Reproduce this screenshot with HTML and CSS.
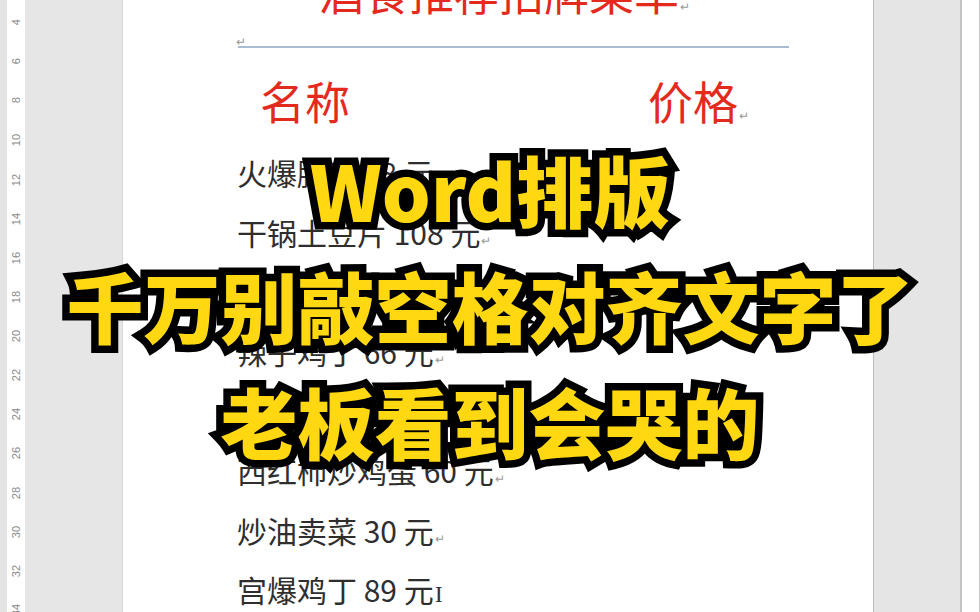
FILE: index.html
```html
<!DOCTYPE html>
<html lang="zh-CN">
<head>
<meta charset="utf-8">
<title>Word排版</title>
<link rel="stylesheet" href="styles.css">
</head>
<body>
<div class="app">
  <div class="edge-left"></div>
  <div class="vruler">
    <span class="num">4</span><span class="num">6</span><span class="num">8</span><span class="num">10</span>
    <span class="num">12</span><span class="num">14</span><span class="num">16</span><span class="num">18</span>
    <span class="num">20</span><span class="num">22</span><span class="num">24</span><span class="num">26</span>
    <span class="num">28</span><span class="num">30</span><span class="num">32</span><span class="num">34</span>
  </div>
  <div class="gutter-left"></div>
  <div class="page">
    <div class="doc">
      <p class="title">酒食推荐招牌菜单<span class="mark">↵</span></p>
      <div class="rule-row"><span class="mark">↵</span><div class="rule"></div></div>
      <div class="heads">
        <span class="head">名称</span>
        <span class="head head-price">价格<span class="mark">↵</span></span>
      </div>
      <div class="items">
        <p class="item">火爆腰花 88 元<span class="mark">↵</span></p>
        <p class="item">干锅土豆片 108 元<span class="mark">↵</span></p>
        <p class="item">水煮肉片 78 元<span class="mark">↵</span></p>
        <p class="item">辣子鸡丁 66 元<span class="mark">↵</span></p>
        <p class="item">鱼香肉丝 48 元<span class="mark">↵</span></p>
        <p class="item">西红柿炒鸡蛋 60 元<span class="mark">↵</span></p>
        <p class="item">炒油卖菜 30 元<span class="mark">↵</span></p>
        <p class="item">宫爆鸡丁 89 元<span class="cursor">I</span></p>
      </div>
    </div>
  </div>
  <div class="gutter-right"></div>
  <div class="scroll"></div>
</div>
<div class="overlay">
  <div class="line">Word排版</div>
  <div class="line">千万别敲空格对齐文字了</div>
  <div class="line">老板看到会哭的</div>
</div>
</body>
</html>
```

FILE: styles.css
```css
html, body {
  margin: 0;
  padding: 0;
  width: 980px;
  height: 612px;
  overflow: hidden;
  background: #e6e6e6;
  font-family: "Noto Sans CJK SC", "Noto Sans", sans-serif;
}

.app {
  display: flex;
  width: 980px;
  height: 612px;
}

.edge-left {
  width: 7px;
  background: #e3e3e3;
}

.vruler {
  width: 18px;
  background: #ffffff;
  display: flex;
  flex-direction: column;
  align-items: center;
  padding-top: 3px;
  box-sizing: border-box;
}

.num {
  height: 39.13px;
  flex: none;
  display: flex;
  align-items: center;
  justify-content: center;
  writing-mode: vertical-rl;
  transform: rotate(180deg);
  font-family: "Liberation Sans", Arial, sans-serif;
  font-size: 11px;
  color: #8a8a8a;
}

.gutter-left {
  width: 97px;
  background: #e6e6e6;
  border-right: 1px solid #d6d6d6;
}

.page {
  width: 750px;
  background: #ffffff;
  overflow: hidden;
}

.doc {
  margin-top: -31px;
  padding-left: 114px;
  width: 552px;
}

.title {
  margin: 0;
  font-size: 45px;
  line-height: 45px;
  color: #e42a1d;
  padding-left: 82px;
  white-space: nowrap;
}

.mark {
  font-size: 12px;
  color: #9a9a9a;
  margin-left: 1px;
}

.rule-row {
  position: relative;
  height: 38px;
  margin-top: 7px;
}

.rule-row .mark {
  position: absolute;
  left: -1px;
  top: -1px;
  line-height: 14px;
  margin: 0;
}

.rule {
  position: absolute;
  left: 1px;
  right: 0;
  top: 11px;
  height: 0;
  border-top: 2px solid #a9bcd3;
}

.heads {
  display: flex;
  padding-left: 23px;
  height: 55px;
  align-items: flex-start;
}

.head {
  font-size: 45px;
  line-height: 55px;
  color: #e42a1d;
  white-space: nowrap;
}

.head-price {
  margin-left: 298px;
}

.head-price .mark {
  margin-left: 1px;
}

.items {
  padding-top: 15px;
}

.item {
  margin: 0;
  font-size: 30px;
  line-height: 59.6px;
  height: 59.6px;
  color: #2e2e2e;
  white-space: nowrap;
}

.cursor {
  font-family: "Liberation Serif", serif;
  font-size: 24px;
  color: #333;
  margin-left: 1px;
}

.gutter-right {
  width: 86px;
  background: #e5e5e5;
  border-left: 1px solid #bdbdbd;
  border-right: 2px solid #c4c4c4;
}

.scroll {
  flex: 1;
  background: #ffffff;
  border-right: 1px solid #c8c8c8;
}

.overlay {
  position: absolute;
  left: 0;
  top: 131px;
  width: 980px;
  display: flex;
  flex-direction: column;
  align-items: center;
}

.line {
  font-family: "Noto Sans CJK SC", "Noto Sans", sans-serif;
  font-weight: 900;
  font-size: 77px;
  line-height: 116px;
  color: #ffd812;
  -webkit-text-stroke: 15px #000;
  paint-order: stroke fill;
  text-shadow: 2px 3px 0 #000;
  white-space: nowrap;
}
```
